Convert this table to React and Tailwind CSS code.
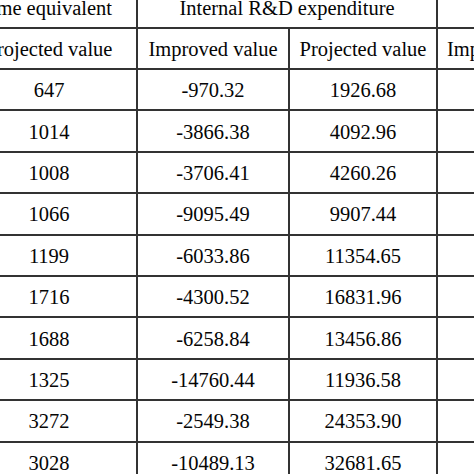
import React from 'react';

const rows = [
    ['647', '-970.32', '1926.68'],
    ['1014', '-3866.38', '4092.96'],
    ['1008', '-3706.41', '4260.26'],
    ['1066', '-9095.49', '9907.44'],
    ['1199', '-6033.86', '11354.65'],
    ['1716', '-4300.52', '16831.96'],
    ['1688', '-6258.84', '13456.86'],
    ['1325', '-14760.44', '11936.58'],
    ['3272', '-2549.38', '24353.90'],
    ['3028', '-10489.13', '32681.65'],
];

const cell = 'flex items-center justify-center pt-[2px] border-r-2 border-b-2 border-[#333] whitespace-nowrap overflow-hidden';

const App = () => {
    return (
        <div className="w-[474px] h-[474px] overflow-hidden bg-white">
            <div className="grid grid-cols-[176px_152px_148px_150px] grid-rows-[42px_41px_repeat(10,41.4px)] w-max ml-[-38px] mt-[-13px] font-['Liberation_Serif',serif] text-[20.5px] text-[#050505]">
                {/* Header: groups */}
                <div className={`${cell} justify-end pr-[24px]`}>
                    <span>Full-time equivalent</span>
                </div>
                <div className={`${cell} col-span-2`}>Internal R&amp;D expenditure</div>
                <div className={cell}></div>

                {/* Header: value kinds */}
                <div className={cell}>Projected value</div>
                <div className={cell}>Improved value</div>
                <div className={cell}>Projected value</div>
                <div className={`${cell} justify-start pl-[9px]`}>Improved value</div>

                {rows.map((r, i) => (
                    <React.Fragment key={i}>
                        <div className={cell}>{r[0]}</div>
                        <div className={cell}>{r[1]}</div>
                        <div className={cell}>{r[2]}</div>
                        <div className={cell}></div>
                    </React.Fragment>
                ))}
            </div>
        </div>
    );
};

export default App;
